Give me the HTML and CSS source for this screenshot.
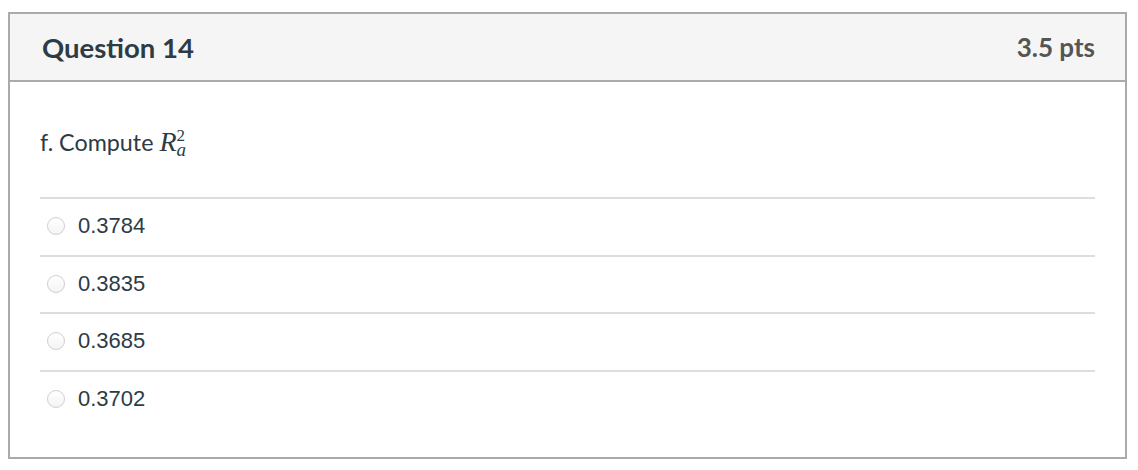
FILE: index.html
```html
<!DOCTYPE html>
<html>
<head>
<meta charset="utf-8">
<link rel="stylesheet" href="styles.css">
</head>
<body>
<div class="question">
  <div class="header">
    <h2 class="title">Question 14</h2>
    <div class="points">3.5 pts</div>
  </div>
  <div class="body">
    <p class="prompt">f. Compute <span class="math"><span class="mi">R</span><span class="scripts"><span class="sup">2</span><span class="sub">a</span></span></span></p>
    <ul class="answers">
      <li class="answer"><span class="radio"></span><span class="label">0.3784</span></li>
      <li class="answer"><span class="radio"></span><span class="label">0.3835</span></li>
      <li class="answer"><span class="radio"></span><span class="label">0.3685</span></li>
      <li class="answer"><span class="radio"></span><span class="label">0.3702</span></li>
    </ul>
  </div>
</div>
</body>
</html>
```
FILE: styles.css
```css
html, body { margin: 0; padding: 0; background: #fff; }
body { padding: 12px 11px 0 8px; }
.question {
  border: 2px solid #aaaaaa;
  box-sizing: border-box;
  height: 447px;
  font-family: Lato, "Liberation Sans", sans-serif;
  color: #2d3b45;
}
.header {
  background: #f5f5f5;
  border-bottom: 2px solid #aaaaaa;
  height: 68px;
  box-sizing: border-box;
  display: flex;
  align-items: center;
  justify-content: space-between;
  padding: 0 30px 0 32px;
}
.title {
  margin: 0;
  font-size: 27.5px;
  font-weight: 700;
  color: #2d3b45;
}
.points {
  font-size: 26px;
  font-weight: 700;
  color: #555555;
}
.body { padding: 0 30px 0 30px; }
.prompt {
  margin: 0;
  padding: 46px 0 0 0;
  height: 69px;
  font-size: 23.3px;
  line-height: 26px;
}
.math { font-family: "Liberation Serif", serif; }
.mi { font-style: italic; font-size: 28px; }
.scripts {
  display: inline-block;
  vertical-align: -5px;
  margin-left: 0;
}
.sup { display: block; font-size: 17px; line-height: 15px; }
.sub { display: block; font-size: 19px; line-height: 13px; font-style: italic; }
.answers { list-style: none; margin: 0; padding: 0; }
.answer {
  border-top: 2px solid #dddddd;
  height: 57.5px;
  box-sizing: border-box;
  display: flex;
  align-items: center;
  padding-left: 7px;
  padding-bottom: 1px;
}
.radio {
  width: 18px;
  height: 18px;
  border: 1px solid #cfcfcf;
  border-radius: 50%;
  box-sizing: border-box;
  background: linear-gradient(#ffffff, #f4f4f4);
  margin-right: 13px;
}
.label {
  font-family: "Liberation Sans", Arial, sans-serif;
  font-size: 22px;
  color: #2d3b45;
}
```
